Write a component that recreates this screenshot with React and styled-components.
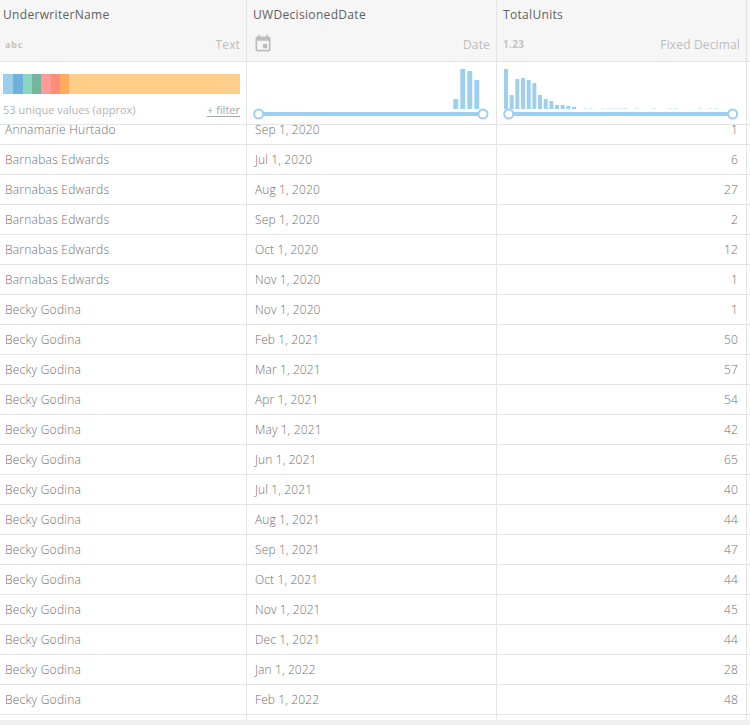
import React from 'react';
import styled, { createGlobalStyle } from 'styled-components';

const GlobalStyle = createGlobalStyle`
  html, body { margin: 0; padding: 0; background: #fff; }
  body { font-family: "Open Sans", "Liberation Sans", sans-serif; }
`;

const COLUMNS = '247px 250px 250px 3px';

const Page = styled.div`
  width: 750px;
  height: 725px;
  display: flex;
  flex-direction: column;
  overflow: hidden;
  background: #f0f0f0;
`;

const Table = styled.div`
  height: 720px;
  display: flex;
  flex-direction: column;
  overflow: hidden;
  background: #fff;
`;

const HeaderRow = styled.div`
  display: grid;
  grid-template-columns: ${COLUMNS};
  height: 62px;
  box-sizing: border-box;
  background: #f6f6f6;
  border-bottom: 1px solid #e4e4e4;
`;

const HeaderCell = styled.div`
  display: flex;
  flex-direction: column;
  box-sizing: border-box;
  padding: 8px 6px 0 ${p => (p.$first ? 3 : 6)}px;
  border-right: 1px solid #e4e4e4;
`;

const ColumnName = styled.div`
  font-size: 12px;
  font-weight: 400;
  letter-spacing: 0.32px;
  line-height: 14px;
  color: #5f5f5f;
`;

const TypeLine = styled.div`
  display: flex;
  justify-content: space-between;
  align-items: center;
  height: 24px;
  margin-top: 10px;
`;

const TypeGlyph = styled.span`
  font-size: ${p => p.$size}px;
  font-weight: 700;
  color: #c4c4c4;
  letter-spacing: ${p => p.$spacing}px;
  padding-left: ${p => p.$inset}px;
`;

const TypeLabel = styled.span`
  font-size: 12px;
  letter-spacing: 0.15px;
  color: #bcbcbc;
`;

const CalendarGlyph = styled.svg`
  margin-top: -1px;
`;

const SummaryRow = styled.div`
  display: grid;
  grid-template-columns: ${COLUMNS};
  height: 63px;
  box-sizing: border-box;
  border-bottom: 1px solid #e4e4e4;
`;

const SummaryCell = styled.div`
  display: flex;
  flex-direction: column;
  box-sizing: border-box;
  border-right: 1px solid #e4e4e4;
`;

const CategoryCell = styled(SummaryCell)`
  padding: 12px 6px 0 3px;
`;

const CategoryBar = styled.div`
  display: flex;
  height: 20px;
`;

const Segment = styled.div`
  flex: ${p => (p.$fill ? 1 : `0 0 ${p.$w}px`)};
  background: ${p => p.$color};
`;

const CategoryFooter = styled.div`
  display: flex;
  justify-content: space-between;
  margin-top: 8px;
  font-size: 11px;
  line-height: 16px;
  color: #b4b4b4;
`;

const FilterLink = styled.span`
  color: #a6a6a6;
  text-decoration: underline;
  text-underline-offset: 2px;
`;

const Rows = styled.div`
  flex: 1;
  overflow: hidden;
`;

const RowList = styled.div`
  margin-top: -10px;
`;

const Row = styled.div`
  display: grid;
  grid-template-columns: ${COLUMNS};
  height: 30px;
  box-sizing: border-box;
  border-bottom: 1px solid #e4e4e4;
`;

const Cell = styled.div`
  box-sizing: border-box;
  padding: 0 8px 0 ${p => (p.$first ? 5 : 8)}px;
  border-right: 1px solid #e4e4e4;
  font-size: 12px;
  font-weight: 300;
  letter-spacing: ${p => (p.$first ? 0.24 : 0.12)}px;
  line-height: 29px;
  color: #707070;
  text-align: ${p => (p.$right ? 'right' : 'left')};
`;

const Filler = styled.div``;

const segments = [
  { w: 10, color: '#9bcfee' },
  { w: 10, color: '#6fb2d9' },
  { w: 9, color: '#8bd6bf' },
  { w: 9, color: '#74b5a0' },
  { w: 10, color: '#ff9a96' },
  { w: 9, color: '#fa8e78' },
  { w: 9, color: '#ffad5c' },
];

const dateBars = [
  { x: 206.3, top: 37, w: 5 },
  { x: 213.3, top: 7, w: 5 },
  { x: 220.3, top: 9, w: 5 },
  { x: 227.3, top: 18, w: 5 },
];

const unitTops = [7, 33, 17, 16, 18, 21, 33, 37, 39, 43, 43, 44, 45];
const unitBars = unitTops.map((t, i) => ({ x: 7 + i * 5.67, top: t, w: 4 }));
const unitSlivers = [
  [86, 4], [92, 4], [104, 4], [110, 5], [116, 5], [122, 9], [138, 4], [155, 4], [172, 4], [177, 4], [201, 4], [211, 4], [217, 5],
];

const Histogram = ({ bars, slivers = [], left, right }) => (
  <svg width="249" height="62" viewBox="0 0 249 62">
    {slivers.map(([x, w]) => (
      <rect key={x} x={x} y="46" width={w} height="1" fill="#d7ebf8" />
    ))}
    {bars.map(b => (
      <rect key={b.x} x={b.x} y={b.top} width={b.w} height={47 - b.top} fill="#9fcfef" />
    ))}
    <rect x={left} y="50" width={right - left} height="4" fill="#9fcfef" />
    <circle cx={left} cy="52" r="4.5" fill="#fff" stroke="#9fcfef" strokeWidth="2" />
    <circle cx={right} cy="52" r="4.5" fill="#fff" stroke="#9fcfef" strokeWidth="2" />
  </svg>
);

const CalendarIcon = () => (
  <CalendarGlyph width="20" height="20" viewBox="0 0 24 24" fill="#bdbdbd">
    <path d="M17 12h-5v5h5v-5zM16 1v2H8V1H6v2H5c-1.1 0-2 .9-2 2v14c0 1.1.9 2 2 2h14c1.1 0 2-.9 2-2V5c0-1.1-.9-2-2-2h-1V1h-2zm3 18H5V8h14v11z" />
  </CalendarGlyph>
);

const rows = [
  ['Annamarie Hurtado', 'Sep 1, 2020', 1],
  ['Barnabas Edwards', 'Jul 1, 2020', 6],
  ['Barnabas Edwards', 'Aug 1, 2020', 27],
  ['Barnabas Edwards', 'Sep 1, 2020', 2],
  ['Barnabas Edwards', 'Oct 1, 2020', 12],
  ['Barnabas Edwards', 'Nov 1, 2020', 1],
  ['Becky Godina', 'Nov 1, 2020', 1],
  ['Becky Godina', 'Feb 1, 2021', 50],
  ['Becky Godina', 'Mar 1, 2021', 57],
  ['Becky Godina', 'Apr 1, 2021', 54],
  ['Becky Godina', 'May 1, 2021', 42],
  ['Becky Godina', 'Jun 1, 2021', 65],
  ['Becky Godina', 'Jul 1, 2021', 40],
  ['Becky Godina', 'Aug 1, 2021', 44],
  ['Becky Godina', 'Sep 1, 2021', 47],
  ['Becky Godina', 'Oct 1, 2021', 44],
  ['Becky Godina', 'Nov 1, 2021', 45],
  ['Becky Godina', 'Dec 1, 2021', 44],
  ['Becky Godina', 'Jan 1, 2022', 28],
  ['Becky Godina', 'Feb 1, 2022', 48],
  ['', '', ''],
];

export default function App() {
  return (
    <Page>
      <GlobalStyle />
      <Table>
        <HeaderRow>
          <HeaderCell $first>
            <ColumnName>UnderwriterName</ColumnName>
            <TypeLine>
              <TypeGlyph $size={9} $spacing={0.8} $inset={2}>abc</TypeGlyph>
              <TypeLabel>Text</TypeLabel>
            </TypeLine>
          </HeaderCell>
          <HeaderCell>
            <ColumnName>UWDecisionedDate</ColumnName>
            <TypeLine>
              <CalendarIcon />
              <TypeLabel>Date</TypeLabel>
            </TypeLine>
          </HeaderCell>
          <HeaderCell>
            <ColumnName>TotalUnits</ColumnName>
            <TypeLine>
              <TypeGlyph $size={10} $spacing={0.3} $inset={0}>1.23</TypeGlyph>
              <TypeLabel>Fixed Decimal</TypeLabel>
            </TypeLine>
          </HeaderCell>
          <Filler />
        </HeaderRow>
        <SummaryRow>
          <CategoryCell>
            <CategoryBar>
              {segments.map(s => (
                <Segment key={s.color} $w={s.w} $color={s.color} />
              ))}
              <Segment $fill $color="#ffcf8a" />
            </CategoryBar>
            <CategoryFooter>
              <span>53 unique values (approx)</span>
              <FilterLink>+ filter</FilterLink>
            </CategoryFooter>
          </CategoryCell>
          <SummaryCell>
            <Histogram bars={dateBars} left={11.7} right={236} />
          </SummaryCell>
          <SummaryCell>
            <Histogram bars={unitBars} slivers={unitSlivers} left={11.7} right={235.7} />
          </SummaryCell>
          <Filler />
        </SummaryRow>
        <Rows>
          <RowList>
            {rows.map((r, i) => (
              <Row key={i}>
                <Cell $first>{r[0]}</Cell>
                <Cell>{r[1]}</Cell>
                <Cell $right>{r[2]}</Cell>
                <Filler />
              </Row>
            ))}
          </RowList>
        </Rows>
      </Table>
    </Page>
  );
}
